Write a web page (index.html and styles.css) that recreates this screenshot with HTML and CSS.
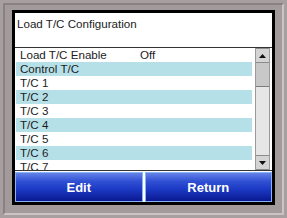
FILE: index.html
```html
<!DOCTYPE html>
<html>
<head>
<meta charset="utf-8">
<link rel="stylesheet" href="styles.css">
</head>
<body>
<div class="bezel">
  <div class="screen">
    <div class="title">Load T/C Configuration</div>
    <div class="list">
      <div class="rows">
        <div class="row"><span class="name">Load T/C Enable</span><span class="val">Off</span></div>
        <div class="row alt"><span class="name">Control T/C</span></div>
        <div class="row"><span class="name">T/C 1</span></div>
        <div class="row alt"><span class="name">T/C 2</span></div>
        <div class="row"><span class="name">T/C 3</span></div>
        <div class="row alt"><span class="name">T/C 4</span></div>
        <div class="row"><span class="name">T/C 5</span></div>
        <div class="row alt"><span class="name">T/C 6</span></div>
        <div class="row"><span class="name">T/C 7</span></div>
      </div>
      <div class="scrollbar">
        <div class="sb-btn"><svg width="7" height="4" viewBox="0 0 7 4"><polygon points="3.5,0 7,4 0,4" fill="#111"/></svg></div>
        <div class="sb-track"><div class="sb-thumb"></div></div>
        <div class="sb-btn"><svg width="7" height="4" viewBox="0 0 7 4"><polygon points="0,0 7,0 3.5,4" fill="#111"/></svg></div>
      </div>
    </div>
    <div class="buttons">
      <div class="btn">Edit</div>
      <div class="btn">Return</div>
    </div>
  </div>
</div>
</body>
</html>
```
FILE: styles.css
```css
html, body {
  margin: 0;
  padding: 0;
}
body {
  width: 287px;
  height: 218px;
  background: #a8a0a0;
  padding: 3px;
  box-sizing: border-box;
  font-family: "Liberation Sans", Arial, sans-serif;
  overflow: hidden;
}
.bezel {
  width: 281px;
  height: 212px;
  box-sizing: border-box;
  border: 2px solid;
  border-color: #8a8282 #cbc4c4 #cbc4c4 #8a8282;
  background: #a39b9b;
  padding: 5px 7px 8px 7px;
}
.screen {
  width: 263px;
  height: 195px;
  box-sizing: border-box;
  border: 3px solid #000;
  background: #fff;
  display: flex;
  flex-direction: column;
}
.title {
  height: 34px;
  box-sizing: border-box;
  padding: 4px 0 0 2px;
  font-size: 11.6px;
  line-height: 14px;
  color: #222;
}
.list {
  height: 124px;
  box-sizing: border-box;
  border-top: 1px solid #333;
  border-bottom: 1px solid #333;
  display: flex;
  padding-left: 1px;
}
.rows {
  width: 236px;
  height: 122px;
  overflow: hidden;
}
.row {
  height: 14px;
  display: flex;
  font-size: 11.6px;
  line-height: 14px;
  color: #1c1c1c;
  padding-left: 4px;
}
.row.alt {
  background: #b6e0e8;
}
.name {
  width: 120px;
}
.scrollbar {
  width: 15px;
  margin-left: 3px;
  height: 122px;
  display: flex;
  flex-direction: column;
  box-sizing: border-box;
  border-left: 1px solid #9a9a9a;
  border-right: 1px solid #9a9a9a;
}
.sb-btn {
  height: 13px;
  background: #d4d4d4;
  border-top: 1px solid #8c8c8c;
  border-bottom: 1px solid #8c8c8c;
  display: flex;
  align-items: center;
  justify-content: center;
}
.sb-track {
  flex: 1;
  background: #e6e6e6;
}
.sb-thumb {
  height: 23px;
  background: #c8c8c8;
  border-bottom: 1px solid #7c7c7c;
}
.buttons {
  flex: 1;
  display: flex;
  gap: 2px;
  padding-top: 1px;
}
.btn {
  flex: 1;
  box-sizing: border-box;
  border: 1px solid #8cb0f4;
  background: linear-gradient(to bottom, #6482e8 0%, #3050d4 30%, #1a38c2 60%, #0a1890 100%);
  color: #fff;
  font-weight: bold;
  font-size: 13px;
  display: flex;
  align-items: center;
  justify-content: center;
}
```
